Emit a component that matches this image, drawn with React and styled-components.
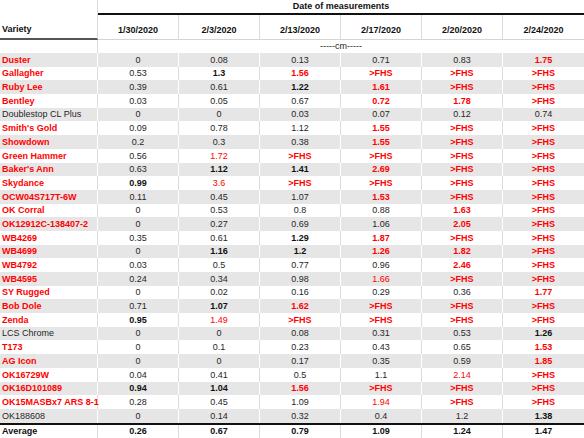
import React from "react";
import styled, { createGlobalStyle } from "styled-components";

const GlobalStyle = createGlobalStyle`
    html, body {
        margin:0;
        padding:0;
        background:#fff;
    }
    body {
        font-family:"Liberation Sans", Arial, sans-serif;
        font-size:9px;
        color:#262626;
    }
`;

const Table = styled.div`
    width:584px;
    height:438px;
    overflow:hidden;
    display:flex;
    flex-direction:column;
`;

const Row = styled.div`
    display:grid;
    grid-template-columns:98px repeat(6, 81px);
    height:${props => props.$height || "13.7px"};
    background:${props => props.$shade ? "#e6e6e6" : "#fff"};
    border-top:${props => props.$topRule || "none"};
    box-sizing:border-box;
`;

const Cell = styled.div`
    grid-column:${props => props.$span ? `span ${props.$span}` : "auto"};
    display:flex;
    align-items:flex-end;
    justify-content:${props => props.$left ? "flex-start" : "center"};
    padding:0 0 ${props => props.$pad || "1px"} ${props => props.$left ? "2px" : "0"};
    border-right:1px solid ${props => props.$shade ? "#fff" : "#dcdcdc"};
    border-bottom:${props => props.$under || "none"};
    box-sizing:border-box;
    white-space:nowrap;
    line-height:11px;
    font-weight:${props => props.$bold ? 700 : 400};
    color:${props => props.$red ? "#ff0000" : props.$bold ? "#111" : "#262626"};
    &:last-child {
        border-right:none;
    }
`;

const dates = ["1/30/2020", "2/3/2020", "2/13/2020", "2/17/2020", "2/20/2020", "2/24/2020"];

// n = plain, b = bold, R = red bold, r = red plain
const rows = [
    ["Duster", "R", ["0", "n"], ["0.08", "n"], ["0.13", "n"], ["0.71", "n"], ["0.83", "n"], ["1.75", "R"]],
    ["Gallagher", "R", ["0.53", "n"], ["1.3", "b"], ["1.56", "R"], [">FHS", "R"], [">FHS", "R"], [">FHS", "R"]],
    ["Ruby Lee", "R", ["0.39", "n"], ["0.61", "n"], ["1.22", "b"], ["1.61", "R"], [">FHS", "R"], [">FHS", "R"]],
    ["Bentley", "R", ["0.03", "n"], ["0.05", "n"], ["0.67", "n"], ["0.72", "R"], ["1.78", "R"], [">FHS", "R"]],
    ["Doublestop CL Plus", "n", ["0", "n"], ["0", "n"], ["0.03", "n"], ["0.07", "n"], ["0.12", "n"], ["0.74", "n"]],
    ["Smith's Gold", "R", ["0.09", "n"], ["0.78", "n"], ["1.12", "n"], ["1.55", "R"], [">FHS", "R"], [">FHS", "R"]],
    ["Showdown", "R", ["0.2", "n"], ["0.3", "n"], ["0.38", "n"], ["1.55", "R"], [">FHS", "R"], [">FHS", "R"]],
    ["Green Hammer", "R", ["0.56", "n"], ["1.72", "r"], [">FHS", "R"], [">FHS", "R"], [">FHS", "R"], [">FHS", "R"]],
    ["Baker's Ann", "R", ["0.63", "n"], ["1.12", "b"], ["1.41", "b"], ["2.69", "R"], [">FHS", "R"], [">FHS", "R"]],
    ["Skydance", "R", ["0.99", "b"], ["3.6", "r"], [">FHS", "R"], [">FHS", "R"], [">FHS", "R"], [">FHS", "R"]],
    ["OCW04S717T-6W", "R", ["0.11", "n"], ["0.45", "n"], ["1.07", "n"], ["1.53", "R"], [">FHS", "R"], [">FHS", "R"]],
    ["OK Corral", "R", ["0", "n"], ["0.53", "n"], ["0.8", "n"], ["0.88", "n"], ["1.63", "R"], [">FHS", "R"]],
    ["OK12912C-138407-2", "R", ["0", "n"], ["0.27", "n"], ["0.69", "n"], ["1.06", "n"], ["2.05", "R"], [">FHS", "R"]],
    ["WB4269", "R", ["0.35", "n"], ["0.61", "n"], ["1.29", "b"], ["1.87", "R"], [">FHS", "R"], [">FHS", "R"]],
    ["WB4699", "R", ["0", "n"], ["1.16", "b"], ["1.2", "b"], ["1.26", "R"], ["1.82", "R"], [">FHS", "R"]],
    ["WB4792", "R", ["0.03", "n"], ["0.5", "n"], ["0.77", "n"], ["0.96", "n"], ["2.46", "R"], [">FHS", "R"]],
    ["WB4595", "R", ["0.24", "n"], ["0.34", "n"], ["0.98", "n"], ["1.66", "r"], [">FHS", "R"], [">FHS", "R"]],
    ["SY Rugged", "R", ["0", "n"], ["0.02", "n"], ["0.16", "n"], ["0.29", "n"], ["0.36", "n"], ["1.77", "R"]],
    ["Bob Dole", "R", ["0.71", "n"], ["1.07", "b"], ["1.62", "R"], [">FHS", "R"], [">FHS", "R"], [">FHS", "R"]],
    ["Zenda", "R", ["0.95", "b"], ["1.49", "r"], [">FHS", "R"], [">FHS", "R"], [">FHS", "R"], [">FHS", "R"]],
    ["LCS Chrome", "n", ["0", "n"], ["0", "n"], ["0.08", "n"], ["0.31", "n"], ["0.53", "n"], ["1.26", "b"]],
    ["T173", "R", ["0", "n"], ["0.1", "n"], ["0.23", "n"], ["0.43", "n"], ["0.65", "n"], ["1.53", "R"]],
    ["AG Icon", "R", ["0", "n"], ["0", "n"], ["0.17", "n"], ["0.35", "n"], ["0.59", "n"], ["1.85", "R"]],
    ["OK16729W", "R", ["0.04", "n"], ["0.41", "n"], ["0.5", "n"], ["1.1", "n"], ["2.14", "r"], [">FHS", "R"]],
    ["OK16D101089", "R", ["0.94", "b"], ["1.04", "b"], ["1.56", "R"], [">FHS", "R"], [">FHS", "R"], [">FHS", "R"]],
    ["OK15MASBx7 ARS 8-1", "R", ["0.28", "n"], ["0.45", "n"], ["1.09", "n"], ["1.94", "r"], [">FHS", "R"], [">FHS", "R"]],
    ["OK188608", "n", ["0", "n"], ["0.14", "n"], ["0.32", "n"], ["0.4", "n"], ["1.2", "n"], ["1.38", "b"]],
];

const averages = ["0.26", "0.67", "0.79", "1.09", "1.24", "1.47"];

const styleOf = code => ({
    $bold: code === "b" || code === "R",
    $red: code === "R" || code === "r",
});

const App = () => (
    <>
        <GlobalStyle />
        <Table>
            <Row $height="15px">
                <Cell $left />
                <Cell $span={6} $bold $under="2px solid #111">
                    Date of measurements
                </Cell>
            </Row>
            <Row $height="25px">
                <Cell $left $bold $pad="3px" $under="2px solid #555">Variety</Cell>
                {dates.map(date => (
                    <Cell key={date} $bold $pad="3px" $under="1px solid #d4d4d4">{date}</Cell>
                ))}
            </Row>
            <Row $height="13px">
                <Cell $left />
                <Cell $span={6}>-----cm-----</Cell>
            </Row>
            {rows.map(([name, nameCode, ...values], index) => (
                <Row key={name} $shade={index % 2 === 0}>
                    <Cell $left $shade={index % 2 === 0} {...styleOf(nameCode)}>{name}</Cell>
                    {values.map(([value, code], i) => (
                        <Cell key={i} $shade={index % 2 === 0} {...styleOf(code)}>{value}</Cell>
                    ))}
                </Row>
            ))}
            <Row $height="15px" $topRule="2px solid #111">
                <Cell $left $bold>Average</Cell>
                {averages.map((value, i) => (
                    <Cell key={i} $bold>{value}</Cell>
                ))}
            </Row>
        </Table>
    </>
);

export default App;
